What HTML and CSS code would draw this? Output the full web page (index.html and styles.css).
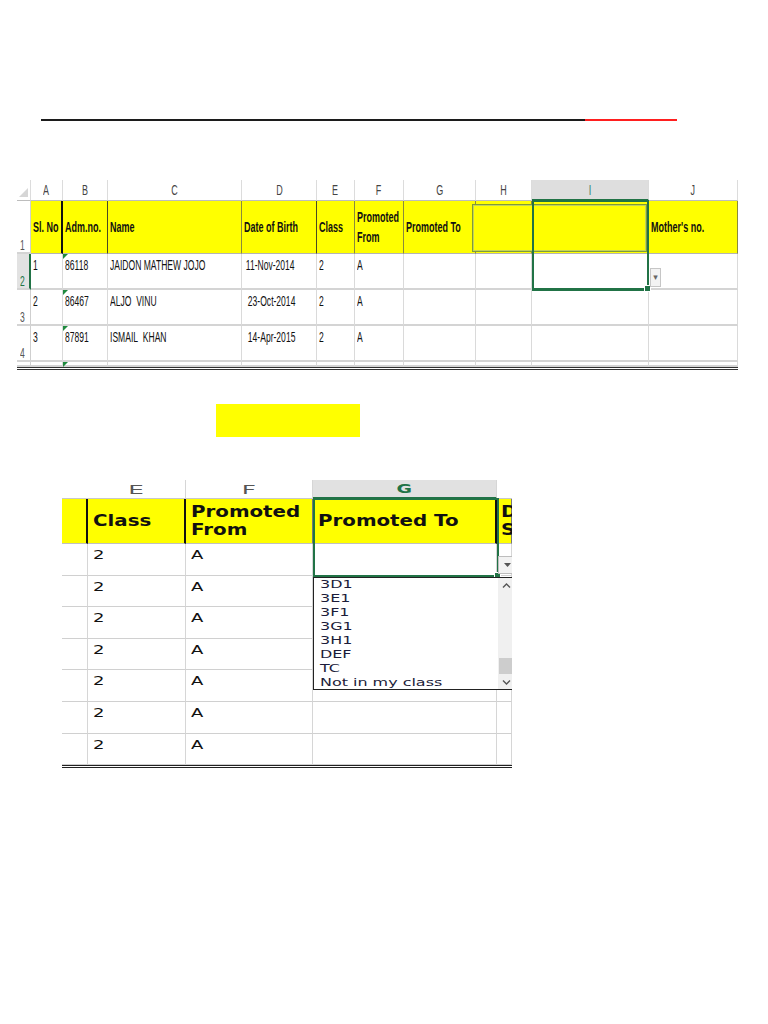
FILE: index.html
```html
<!DOCTYPE html>
<html>
<head>
<meta charset="utf-8">
<title>Promotion list</title>
<link rel="stylesheet" href="styles.css">
</head>
<body>
<div class="page">

  <div class="rule"><span class="black"></span><span class="red"></span></div>

  <!-- full sheet -->
  <div class="sheet sheet-a">
    <div class="grid">
      <div class="col corner"></div>
      <div class="col"><span class="t">A</span></div>
      <div class="col"><span class="t">B</span></div>
      <div class="col"><span class="t">C</span></div>
      <div class="col"><span class="t">D</span></div>
      <div class="col"><span class="t">E</span></div>
      <div class="col"><span class="t">F</span></div>
      <div class="col"><span class="t">G</span></div>
      <div class="col"><span class="t">H</span></div>
      <div class="col on"><span class="t">I</span></div>
      <div class="col"><span class="t">J</span></div>

      <div class="rh"><span class="t">1</span></div>
      <div class="hd black"><span class="t">Sl. No</span></div>
      <div class="hd dark"><span class="t">Adm.no.</span></div>
      <div class="hd"><span class="t">Name</span></div>
      <div class="hd dark"><span class="t">Date of Birth</span></div>
      <div class="hd"><span class="t">Class</span></div>
      <div class="hd"><span class="t">Promoted<br>From</span></div>
      <div class="hd"><span class="t">Promoted To</span></div>
      <div class="hd"></div>
      <div class="hd dark"></div>
      <div class="hd"><span class="t">Mother's no.</span></div>

      <div class="rh on"><span class="t">2</span></div>
      <div class="c"><span class="t">1</span></div>
      <div class="c flag"><span class="t">86118</span></div>
      <div class="c"><span class="t">JAIDON MATHEW JOJO</span></div>
      <div class="c r"><span class="t">11-Nov-2014</span></div>
      <div class="c"><span class="t">2</span></div>
      <div class="c"><span class="t">A</span></div>
      <div class="c"></div>
      <div class="c"></div>
      <div class="c"></div>
      <div class="c"></div>

      <div class="rh"><span class="t">3</span></div>
      <div class="c"><span class="t">2</span></div>
      <div class="c flag"><span class="t">86467</span></div>
      <div class="c"><span class="t">ALJO&nbsp; VINU</span></div>
      <div class="c r"><span class="t">23-Oct-2014</span></div>
      <div class="c"><span class="t">2</span></div>
      <div class="c"><span class="t">A</span></div>
      <div class="c"></div>
      <div class="c"></div>
      <div class="c"></div>
      <div class="c"></div>

      <div class="rh"><span class="t">4</span></div>
      <div class="c"><span class="t">3</span></div>
      <div class="c flag"><span class="t">87891</span></div>
      <div class="c"><span class="t">ISMAIL&nbsp; KHAN</span></div>
      <div class="c r"><span class="t">14-Apr-2015</span></div>
      <div class="c"><span class="t">2</span></div>
      <div class="c"><span class="t">A</span></div>
      <div class="c"></div>
      <div class="c"></div>
      <div class="c"></div>
      <div class="c"></div>

      <div class="rh"></div>
      <div class="c"></div>
      <div class="c flag"></div>
      <div class="c"></div>
      <div class="c"></div>
      <div class="c"></div>
      <div class="c"></div>
      <div class="c"></div>
      <div class="c"></div>
      <div class="c"></div>
      <div class="c"></div>
    </div>

    <div class="textbox"></div>
    <div class="selection"><i class="handle"></i></div>
    <div class="dd-btn">&#9662;</div>
  </div>

  <div class="marker"></div>

  <!-- close-up of the Promoted To list -->
  <div class="sheet sheet-b">
    <div class="grid">
      <div class="col"></div>
      <div class="col"><span class="t">E</span></div>
      <div class="col"><span class="t">F</span></div>
      <div class="col on"><span class="t">G</span></div>
      <div class="col end"></div>

      <div class="hd dark"></div>
      <div class="hd dark"><span class="t">Class</span></div>
      <div class="hd"><span class="t">Promoted<br>From</span></div>
      <div class="hd dark"><span class="t">Promoted To</span></div>
      <div class="hd cut"><span class="t">D<br>S</span></div>

      <div class="c first"></div><div class="c"><span class="t">2</span></div><div class="c"><span class="t">A</span></div><div class="c"></div><div class="c"></div>
      <div class="c first"></div><div class="c"><span class="t">2</span></div><div class="c"><span class="t">A</span></div><div class="c"></div><div class="c"></div>
      <div class="c first"></div><div class="c"><span class="t">2</span></div><div class="c"><span class="t">A</span></div><div class="c"></div><div class="c"></div>
      <div class="c first"></div><div class="c"><span class="t">2</span></div><div class="c"><span class="t">A</span></div><div class="c"></div><div class="c"></div>
      <div class="c first"></div><div class="c"><span class="t">2</span></div><div class="c"><span class="t">A</span></div><div class="c"></div><div class="c"></div>
      <div class="c first"></div><div class="c"><span class="t">2</span></div><div class="c"><span class="t">A</span></div><div class="c"></div><div class="c"></div>
      <div class="c first"></div><div class="c"><span class="t">2</span></div><div class="c"><span class="t">A</span></div><div class="c"></div><div class="c"></div>
    </div>

    <div class="selection"><i class="handle"></i></div>
    <div class="dd-btn">
      <svg width="7" height="4" viewBox="0 0 7 4"><path d="M0 0h7L3.5 4z" fill="#555"/></svg>
    </div>

    <div class="list">
      <ul>
        <li><span class="t">3D1</span></li>
        <li><span class="t">3E1</span></li>
        <li><span class="t">3F1</span></li>
        <li><span class="t">3G1</span></li>
        <li><span class="t">3H1</span></li>
        <li><span class="t">DEF</span></li>
        <li><span class="t">TC</span></li>
        <li><span class="t">Not in my class</span></li>
      </ul>
      <div class="scroll">
        <svg width="9" height="5" viewBox="0 0 9 5"><path d="M1 4.5L4.5 1L8 4.5" fill="none" stroke="#555" stroke-width="1.4"/></svg>
        <span class="thumb"></span>
        <svg width="9" height="5" viewBox="0 0 9 5"><path d="M1 0.5L4.5 4L8 0.5" fill="none" stroke="#555" stroke-width="1.4"/></svg>
      </div>
    </div>
  </div>

</div>
</body>
</html>
```

FILE: styles.css
```css
html,body{margin:0;padding:0;background:#fff;}
.page{padding-top:119px;}

/* title underline */
.rule{display:flex;margin-left:41px;}
.rule .black{width:544px;height:2px;background:#1c1c1c;}
.rule .red{width:92px;height:2px;background:#ff1f1f;}

.sheet{position:relative;}
.sheet .grid{display:grid;}
.sheet .grid > div{display:flex;box-sizing:border-box;min-width:0;}
.sheet .t{display:inline-block;white-space:nowrap;transform-origin:0 50%;}

/* ---- full sheet ---- */
.sheet-a{margin:59px 0 0 17px;width:721px;font:15px/20px "Liberation Sans",Arial,sans-serif;color:#111;}
.sheet-a .grid{
  grid-template-columns:14px 32px 45px 134px 75px 38px 49px 72px 56px 117px 89px;
  grid-template-rows:21px 53px 36px 36px 36px 5px;
  border-bottom:3px double #333;
}
.sheet-a .t{transform:scaleX(.57);}

.sheet-a .col{justify-content:center;align-items:center;border-right:1px solid #dcdcdc;border-bottom:1px solid #bdbdbd;color:#444;font-size:15px;}
.sheet-a .col .t{transform:scaleX(.6);transform-origin:50% 50%;}
.sheet-a .col.on{background:#dedede;color:#2b7d6b;border-bottom:2px solid #217346;}
.sheet-a .corner{justify-content:flex-end;align-items:flex-end;padding:0 2px 3px 0;}
.sheet-a .corner::after{content:"";border-left:9px solid transparent;border-bottom:9px solid #d6d6d6;}

.sheet-a .rh{align-items:flex-end;padding-left:3px;border-right:1px solid #cfcfcf;border-bottom:2px solid #d4d4d4;color:#555;line-height:14px;}
.sheet-a .rh.on{background:#e2e2e2;color:#217346;border-right:2px solid #217346;}

.sheet-a .hd{align-items:center;padding-left:2px;background:#ff0;font-weight:bold;border-right:1px solid #8a8a3c;border-bottom:1px solid #b4b4b4;}
.sheet-a .hd .t{transform:scaleX(.6);}
.sheet-a .hd.dark{border-right-color:#4a4a22;}
.sheet-a .hd.black{border-right:2px solid #111;}

.sheet-a .c{align-items:flex-start;padding:1px 2px 0;border-right:1px solid #dadada;border-bottom:2px solid #d4d4d4;}
/* dates sit right, short of the column edge */
.sheet-a .c.r{justify-content:flex-end;padding-right:21px;}
.sheet-a .c.r .t{transform-origin:100% 50%;}
.sheet-a .flag{position:relative;}
.sheet-a .flag::before{content:"";position:absolute;left:0;top:0;border-top:5px solid #1f8a3e;border-right:5px solid transparent;}

.sheet-a .textbox{position:absolute;left:455px;top:24px;width:175px;height:48px;box-sizing:border-box;background:#ff0;border:1px solid #7f9a3a;box-shadow:inset 0 0 0 1px #c2d35a;}
.sheet-a .selection{position:absolute;left:515px;top:20px;width:117px;height:91px;box-sizing:border-box;border:2px solid #217346;border-bottom-width:3px;}
.selection .handle{position:absolute;right:-4px;bottom:-4px;width:5px;height:5px;background:#217346;border:1px solid #fff;}
.sheet-a .dd-btn{position:absolute;left:633px;top:88px;width:11px;height:19px;box-sizing:border-box;background:#f3f3f3;border:1px solid #c6c6c6;color:#666;font:9px/17px "DejaVu Sans",sans-serif;text-align:center;}

/* yellow block */
.marker{margin:34px 0 0 216px;width:144px;height:33px;background:#ff0;}

/* ---- close-up ---- */
.sheet-b{margin:43px 0 0 62px;width:450px;overflow:hidden;font-family:"DejaVu Sans",Verdana,sans-serif;color:#111;}
.sheet-b .grid{
  grid-template-columns:26px 98px 127px 184px 15px;
  grid-template-rows:19px 45px 32px 31px 32px 31px 32px 32px 31px;
  border-bottom:3px double #222;
}
.sheet-b .col{justify-content:center;align-items:center;border-right:1px solid #d6d6d6;border-bottom:1px solid #c8c8c8;color:#555;font-size:13px;}
.sheet-b .col .t{transform:scaleX(1.9);transform-origin:50% 50%;}
.sheet-b .col:first-child,.sheet-b .col.end{border-right:0;}
.sheet-b .col.on{background:#e1e1e1;color:#217346;font-weight:bold;border-bottom:2px solid #217346;}
.sheet-b .col.on .t{transform:scaleX(1.45);}

.sheet-b .hd{align-items:center;padding-left:5px;background:#ff0;font:bold 15px/18px "DejaVu Sans",Verdana,sans-serif;border-right:1px solid #777;border-bottom:1px solid #c0c0c0;}
.sheet-b .hd.dark{border-right:2px solid #111;}
.sheet-b .hd .t{transform:scaleX(1.32);}
.sheet-b .hd.cut{padding-left:4px;}

.sheet-b .c{align-items:flex-start;padding:3px 5px 0;font-size:12px;line-height:16px;border-right:1px solid #d6d6d6;border-bottom:1px solid #d0d0d0;}
.sheet-b .c .t{transform:scaleX(1.5);}

.sheet-b .selection{position:absolute;left:251px;top:18px;width:186px;height:79px;box-sizing:border-box;border:2px solid #217346;}
.sheet-b .dd-btn{position:absolute;left:436px;top:76px;width:18px;height:18px;box-sizing:border-box;background:#f2f2f2;border:1px solid #bdbdbd;display:flex;align-items:center;justify-content:center;}

.list{position:absolute;left:251px;top:97px;width:203px;height:113px;box-sizing:border-box;display:flex;background:#fff;border:1px solid #222;}
.list ul{flex:1;margin:0;padding:0 0 0 6px;list-style:none;font-size:11px;line-height:14px;color:#1c1c3a;}
.list .t{transform:scaleX(1.45);}
.list .scroll{width:17px;background:#f0f0f0;display:flex;flex-direction:column;align-items:center;padding:5px 0 4px;box-sizing:border-box;}
.list .scroll .thumb{margin:auto 0 6px;width:15px;height:16px;background:#cdcdcd;}
```
